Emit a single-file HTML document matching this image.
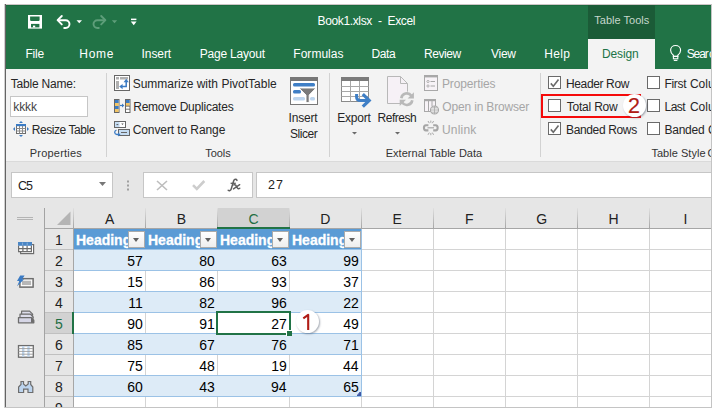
<!DOCTYPE html>
<html><head><meta charset="utf-8"><title>Book1.xlsx - Excel</title>
<style>
html,body{margin:0;padding:0;width:716px;height:412px;overflow:hidden;background:#ffffff;font-family:"Liberation Sans",sans-serif}
.a{position:absolute}
.t{position:absolute;white-space:pre}
svg{position:absolute;overflow:visible}
.cb{position:absolute;width:11px;height:11px;border:1px solid #6a6a6a;background:#ffffff}
.sep{position:absolute;width:1px;background:#d2d2d2}
.fb{position:absolute;width:15px;height:15px;border:1px solid #ababab;background:linear-gradient(#ffffff,#eeeeee)}
.fb:after{content:"";position:absolute;left:3.6px;top:6.4px;border-left:3.8px solid transparent;border-right:3.8px solid transparent;border-top:4.4px solid #606060}
.circ{position:absolute;width:23px;height:23px;border-radius:50%;background:#ffffff;box-shadow:1px 1px 2px rgba(60,70,90,0.45)}
</style></head><body>
<!-- frame -->
<div class="a" style="left:4px;top:4px;width:1px;height:404px;background:#d0d0d0"></div>
<div class="a" style="left:5px;top:4px;width:707px;height:1px;background:#cdc6c6"></div>
<div class="a" style="left:5px;top:4px;width:1px;height:404px;background:#646464"></div>
<div class="a" style="left:711px;top:4px;width:1px;height:404px;background:#c4c4c4"></div>
<div class="a" style="left:5px;top:407px;width:707px;height:1px;background:#c4c4c4"></div>

<!-- title bar + tabs -->
<div class="a" style="left:6px;top:5px;width:705px;height:64px;background:#217346"></div>
<div class="a" style="left:6px;top:5px;width:705px;height:1px;background:#1a6a3e"></div>
<div class="a" style="left:588px;top:5px;width:67px;height:34px;background:#1b5b37"></div>
<div class="a" style="left:588px;top:39px;width:67px;height:30px;background:#f3f3f3"></div>

<!--QAT-->
<svg style="left:0;top:0" width="716" height="40" viewBox="0 0 716 40">
  <rect x="28" y="15" width="14" height="13.6" fill="#fff"/>
  <path d="M30.1 16.4 H39.6 V20.2 L38.8 21 H30.9 L30.1 20.2 Z" fill="#217346"/>
  <rect x="31" y="23.9" width="8.4" height="3.5" fill="#217346"/>
  <rect x="33" y="25.6" width="2.2" height="1.8" fill="#fff"/>
  <path d="M58.5 20.2 H65.6 A3.9 3.9 0 0 1 65.6 28 H64.2" fill="none" stroke="#fff" stroke-width="1.9" stroke-linecap="round"/>
  <path d="M61.8 16 L57.6 20.2 L61.8 24.4" fill="none" stroke="#fff" stroke-width="1.9" stroke-linecap="round" stroke-linejoin="round"/>
  <path d="M76.5 20.3 H82 L79.25 23.2 Z" fill="#fff"/>
  <path d="M104.5 20.2 H97.4 A3.9 3.9 0 0 0 97.4 28 H98.8" fill="none" stroke="#5e9e7a" stroke-width="1.9" stroke-linecap="round"/>
  <path d="M101.2 16 L105.4 20.2 L101.2 24.4" fill="none" stroke="#5e9e7a" stroke-width="1.9" stroke-linecap="round" stroke-linejoin="round"/>
  <path d="M111.8 20.3 H117.2 L114.5 23.2 Z" fill="#5e9e7a"/>
  <rect x="131" y="18.6" width="5.4" height="1.5" fill="#fff"/>
  <path d="M130.8 21.6 H136.6 L133.7 25.2 Z" fill="#fff"/>
</svg>
<!-- lightbulb -->
<svg style="left:660px;top:40px" width="30" height="26" viewBox="660 40 30 26">
  <path d="M673.4 56.4 V55.2 C671.6 53.9 670.6 52.2 670.6 50.3 C670.6 47.4 672.8 45.5 675.6 45.5 C678.4 45.5 680.6 47.4 680.6 50.3 C680.6 52.2 679.6 53.9 677.8 55.2 V56.4 Z" fill="none" stroke="#fff" stroke-width="1.15"/>
  <rect x="673.4" y="56.4" width="4.4" height="2.4" fill="none" stroke="#fff" stroke-width="1.1"/>
  <path d="M673.8 60.4 H677.4" stroke="#fff" stroke-width="1.1"/>
</svg>

<!-- ribbon -->
<div class="a" style="left:6px;top:69px;width:705px;height:92px;background:#f3f3f3"></div>
<div class="a" style="left:6px;top:161px;width:705px;height:1px;background:#dadada"></div>
<div class="sep" style="left:106px;top:73px;height:84px"></div>
<div class="sep" style="left:329px;top:73px;height:84px"></div>
<div class="sep" style="left:540px;top:73px;height:84px"></div>
<div class="a" style="left:10px;top:96px;width:76px;height:19px;border:1px solid #c6c6c6;background:#fff"></div>

<svg style="left:0;top:68px" width="716" height="94" viewBox="0 68 716 94">
 <!-- resize table -->
 <rect x="16.5" y="125.5" width="9" height="8" fill="#fff" stroke="#6d6d6d" stroke-width="1"/>
 <rect x="16" y="124" width="10" height="2.2" fill="#3b7bc4"/>
 <path d="M16.5 128.5 H25.5 M16.5 131 H25.5 M19.5 126 V133.5 M22.5 126 V133.5" stroke="#8a8a8a" stroke-width="1"/>
 <path d="M21 121 L23 123 H19 Z M21 137 L23 135 H19 Z M13 129 L15 127 V131 Z M29 129 L27 127 V131 Z" fill="#3b7bc4"/>
 <!-- summarize -->
 <rect x="114.5" y="75.5" width="15" height="15" fill="#fff" stroke="#666" stroke-width="1"/>
 <rect x="116" y="77" width="3" height="2.5" fill="#b0b0b0"/>
 <rect x="120" y="77" width="8" height="2.5" fill="#b0b0b0"/>
 <rect x="116" y="81" width="3" height="8" fill="#b0b0b0"/>
 <path d="M121.5 86.6 H126.2 V81.5" fill="none" stroke="#3b7bc4" stroke-width="1.5"/>
 <path d="M119.2 86.6 L122.6 84 V89.2 Z M126.2 78.8 L123.6 82.2 H128.8 Z" fill="#3b7bc4"/>
 <!-- remove duplicates -->
 <rect x="114.5" y="99.5" width="4.5" height="13" fill="#fff" stroke="#666" stroke-width="1"/>
 <rect x="115" y="100" width="3.5" height="3" fill="#3b7bc4"/><rect x="115" y="103" width="3.5" height="3" fill="#f2c463"/>
 <rect x="115" y="106" width="3.5" height="3" fill="#3b7bc4"/><rect x="115" y="109" width="3.5" height="3" fill="#f2c463"/>
 <rect x="125.5" y="99.5" width="4.5" height="13" fill="#fff" stroke="#666" stroke-width="1"/>
 <rect x="126" y="100" width="3.5" height="3" fill="#3b7bc4"/><rect x="126" y="103" width="3.5" height="3" fill="#f2c463"/>
 <path d="M125.5 106.2 H130 M125.5 109.2 H130" stroke="#666" stroke-width="0.9"/>
 <path d="M120 105.5 H123" stroke="#3b7bc4" stroke-width="1.2"/><path d="M124.3 105.5 L122 103.6 V107.4 Z" fill="#3b7bc4"/>
 <!-- convert to range -->
 <rect x="114.5" y="121.5" width="11" height="6" fill="#fff" stroke="#666" stroke-width="1"/>
 <rect x="115" y="122" width="4.5" height="5" fill="#c5dcf2"/>
 <path d="M116.5 124.6 H118.3" stroke="#555" stroke-width="1"/>
 <path d="M121.3 123.5 H123.7 L122.5 125 Z" fill="#555"/>
 <rect x="118.5" y="129.5" width="11" height="6" fill="#c5dcf2" stroke="#666" stroke-width="1"/>
 <path d="M121 132.5 H127" stroke="#666" stroke-width="1"/>
 <path d="M116.5 130 C114 131 114 134 117 134.5 H119" fill="none" stroke="#3b7bc4" stroke-width="1.3"/>
 <path d="M120.5 134.5 L118 132.5 V136.5 Z" fill="#3b7bc4"/>
 <!-- insert slicer -->
 <rect x="290.5" y="77.5" width="27" height="27" fill="#fff" stroke="#777" stroke-width="1"/>
 <rect x="290" y="77" width="28" height="4" fill="#777"/>
 <rect x="293" y="83" width="22" height="3.6" rx="1.5" fill="#3f7fc6"/>
 <rect x="293" y="90" width="8" height="3.6" rx="1.5" fill="#3f7fc6"/>
 <rect x="293" y="97" width="12" height="3.6" rx="1.5" fill="#bdd5ee"/>
 <rect x="310" y="97" width="5" height="3.6" rx="1.5" fill="#bdd5ee"/>
 <path d="M299 88 H316 L309.2 95 V102.6 H306 V95 Z" fill="#7a7a7a" stroke="#fff" stroke-width="0.9"/>
 <!-- export -->
 <rect x="341.5" y="77.5" width="27" height="24" fill="#fff" stroke="#8a8a8a" stroke-width="1"/>
 <rect x="341" y="77" width="28" height="4" fill="#7b7b7b"/>
 <path d="M341.5 86.5 H368.5 M341.5 91.5 H368.5 M341.5 96.5 H368.5 M350.5 81 V101.5 M359.5 81 V101.5" stroke="#a8a8a8" stroke-width="1"/>
 <path d="M356.6 94 V97.2 C356.6 99.6 358 100.4 360.5 100.4 H368" fill="none" stroke="#3f7fc6" stroke-width="3"/>
 <path d="M362.8 94.2 L369.2 100.4 L362.8 106.6" fill="none" stroke="#3f7fc6" stroke-width="3.2"/>
 <!-- refresh -->
 <path d="M387.5 76.5 H400.5 L407.5 83.5 V103.5 H387.5 Z" fill="#f6f1f6" stroke="#b8b8b8" stroke-width="1"/>
 <path d="M400.5 76.5 V83.5 H407.5" fill="none" stroke="#b8b8b8" stroke-width="1"/>
 <circle cx="406.8" cy="99.2" r="7.6" fill="#f3f3f3"/>
 <path d="M401.3 98.2 A5.6 5.6 0 0 1 411.4 95.8 M412.3 100.2 A5.6 5.6 0 0 1 402.2 102.6" fill="none" stroke="#b9b9b9" stroke-width="2.6"/>
 <path d="M413.9 92.3 V98.6 H407.6 Z M399.7 106.1 V99.8 H406 Z" fill="#b9b9b9"/>
 <path d="M352 132 H357 L354.5 134.5 Z M395 132 H400 L397.5 134.5 Z" fill="#6a6a6a"/>
 <!-- properties -->
 <rect x="424.5" y="75.5" width="13" height="15" fill="#f7f3f7" stroke="#a8a8a8" stroke-width="1"/>
 <rect x="424" y="75" width="14" height="2.4" fill="#a8a8a8"/>
 <circle cx="428" cy="81.5" r="1.1" fill="none" stroke="#a8a8a8" stroke-width="0.9"/>
 <circle cx="428" cy="86" r="1.1" fill="none" stroke="#a8a8a8" stroke-width="0.9"/>
 <path d="M430.5 81.5 H435 M430.5 86 H435" stroke="#a8a8a8" stroke-width="1"/>
 <!-- open in browser -->
 <rect x="424.5" y="99.5" width="11" height="12" fill="#f7f3f7" stroke="#a8a8a8" stroke-width="1"/>
 <rect x="424" y="99" width="12" height="2.2" fill="#a8a8a8"/>
 <path d="M428.5 101 V111.5 M432 101 V106" stroke="#a8a8a8" stroke-width="1"/>
 <circle cx="434.5" cy="110" r="4" fill="#f3f3f3" stroke="#a8a8a8" stroke-width="1.1"/>
 <path d="M430.6 110 H438.4 M434.5 106 V114 M431.5 107.8 H437.5 M431.5 112.2 H437.5" stroke="#a8a8a8" stroke-width="0.8"/>
 <!-- unlink -->
 <path d="M428.4 125.2 H425.9 C423.3 125.2 423.3 130.4 425.9 130.4 H428.4 M433.2 125.2 H435.7 C438.3 125.2 438.3 130.4 435.7 130.4 H433.2" fill="none" stroke="#a6a6a6" stroke-width="2.1"/>
 <path d="M427.5 127.8 H434" stroke="#a8a8a8" stroke-width="1.2"/>
 <path d="M428 121 L429.3 123.2 M433.6 121 L432.3 123.2 M430.8 120.6 V122.8 M428 134.8 L429.3 132.6 M433.6 134.8 L432.3 132.6 M430.8 135.2 V133" stroke="#a8a8a8" stroke-width="1"/>
</svg>

<!-- checkboxes -->
<div class="cb" style="left:548px;top:76px"></div>
<div class="cb" style="left:548px;top:99px"></div>
<div class="cb" style="left:548px;top:122px"></div>
<div class="cb" style="left:647px;top:76px"></div>
<div class="cb" style="left:647px;top:99px"></div>
<div class="cb" style="left:647px;top:122px"></div>
<svg style="left:548px;top:76px" width="13" height="13" viewBox="0 0 13 13"><path d="M2.8 7.4 L5.3 10.2 L10.5 3.4" fill="none" stroke="#6a6a6a" stroke-width="1.6"/></svg>
<svg style="left:548px;top:122px" width="13" height="13" viewBox="0 0 13 13"><path d="M2.8 7.4 L5.3 10.2 L10.5 3.4" fill="none" stroke="#6a6a6a" stroke-width="1.6"/></svg>

<!-- formula bar area -->
<div class="a" style="left:6px;top:162px;width:705px;height:245px;background:#e6e6e6"></div>
<div class="a" style="left:11px;top:172px;width:100px;height:24px;border:1px solid #c6c6c6;background:#fff"></div>
<svg style="left:0;top:160px" width="716" height="40" viewBox="0 160 716 40">
  <path d="M99 182 H106 L102.5 186 Z" fill="#777"/>
  <rect x="127" y="180.5" width="2" height="2" fill="#a0a0a0"/>
  <rect x="127" y="184.5" width="2" height="2" fill="#a0a0a0"/>
  <rect x="127" y="188.5" width="2" height="2" fill="#a0a0a0"/>
</svg>
<div class="a" style="left:143px;top:172px;width:108px;height:24px;border:1px solid #c6c6c6;background:#fff"></div>
<svg style="left:0;top:160px" width="716" height="40" viewBox="0 160 716 40">
  <path d="M157 181 L167 190 M167 181 L157 190" stroke="#bdbdbd" stroke-width="1.6"/>
  <path d="M193 185.2 L196.8 189 L204.3 181" fill="none" stroke="#cdcdcd" stroke-width="2.6"/>
</svg>
<svg style="left:220px;top:172px" width="30" height="25" viewBox="220 172 30 25"><path d="M237 180.4 C236.4 179 234.4 178.9 233.7 180.8 L231.2 189 C230.7 190.6 229.2 191.1 228.2 190.2" fill="none" stroke="#5e5e5e" stroke-width="1.5" stroke-linecap="round"/><path d="M230.6 183.3 H235.8" stroke="#5e5e5e" stroke-width="1.3"/><path d="M233.8 184.9 C234.9 184.4 235.8 185 236.3 186.1 L237.3 187.9 C237.8 188.9 238.8 189.1 239.8 188.3 M239.7 184.7 L233.5 188.9" fill="none" stroke="#5e5e5e" stroke-width="1.4" stroke-linecap="round"/></svg>
<div class="a" style="left:256px;top:172px;width:460px;height:24px;border:1px solid #c6c6c6;background:#fff"></div>

<div class="a" style="left:44px;top:208px;width:1px;height:199px;background:#a3a3a3"></div>
<div class="a" style="left:17px;top:217px;width:16px;height:1px;background:#b4b4b4"></div>
<div class="a" style="left:17px;top:219px;width:16px;height:1px;background:#b4b4b4"></div>
<div class="a" style="left:45px;top:208px;width:666px;height:20px;background:#e6e6e6"></div>
<div class="a" style="left:73px;top:208px;width:1px;height:20px;background:linear-gradient(#e0e0e0,#a6a6a6)"></div>
<div class="a" style="left:145px;top:208px;width:1px;height:20px;background:linear-gradient(#e0e0e0,#a6a6a6)"></div>
<div class="a" style="left:217px;top:208px;width:1px;height:20px;background:linear-gradient(#e0e0e0,#a6a6a6)"></div>
<div class="a" style="left:289px;top:208px;width:1px;height:20px;background:linear-gradient(#e0e0e0,#a6a6a6)"></div>
<div class="a" style="left:361px;top:208px;width:1px;height:20px;background:linear-gradient(#e0e0e0,#a6a6a6)"></div>
<div class="a" style="left:433px;top:208px;width:1px;height:20px;background:linear-gradient(#e0e0e0,#a6a6a6)"></div>
<div class="a" style="left:505px;top:208px;width:1px;height:20px;background:linear-gradient(#e0e0e0,#a6a6a6)"></div>
<div class="a" style="left:577px;top:208px;width:1px;height:20px;background:linear-gradient(#e0e0e0,#a6a6a6)"></div>
<div class="a" style="left:649px;top:208px;width:1px;height:20px;background:linear-gradient(#e0e0e0,#a6a6a6)"></div>
<div class="a" style="left:218px;top:208px;width:71px;height:19px;background:#d2d2d2"></div>
<div class="a" style="left:45px;top:228px;width:666px;height:1px;background:#a6a6a6"></div>
<div class="a" style="left:217px;top:227px;width:73px;height:2px;background:#217346"></div>
<svg style="left:0;top:200px" width="80" height="30" viewBox="0 200 80 30"><path d="M57 225 H70.5 V211.5 Z" fill="#b4b4b4"/></svg>
<div class="a" style="left:45px;top:229px;width:28px;height:178px;background:#e6e6e6"></div>
<div class="a" style="left:73px;top:229px;width:1px;height:178px;background:#a6a6a6"></div>
<div class="a" style="left:45px;top:249px;width:28px;height:1px;background:#c0c0c0"></div>
<div class="a" style="left:45px;top:270px;width:28px;height:1px;background:#c0c0c0"></div>
<div class="a" style="left:45px;top:291px;width:28px;height:1px;background:#c0c0c0"></div>
<div class="a" style="left:45px;top:312px;width:28px;height:1px;background:#c0c0c0"></div>
<div class="a" style="left:45px;top:333px;width:28px;height:1px;background:#c0c0c0"></div>
<div class="a" style="left:45px;top:354px;width:28px;height:1px;background:#c0c0c0"></div>
<div class="a" style="left:45px;top:375px;width:28px;height:1px;background:#c0c0c0"></div>
<div class="a" style="left:45px;top:396px;width:28px;height:1px;background:#c0c0c0"></div>
<div class="a" style="left:45px;top:417px;width:28px;height:1px;background:#c0c0c0"></div>
<div class="a" style="left:45px;top:313px;width:27px;height:20px;background:#d2d2d2"></div>
<div class="a" style="left:72px;top:312px;width:2px;height:22px;background:#217346"></div>
<div class="a" style="left:74px;top:229px;width:637px;height:178px;background:#ffffff"></div>
<div class="a" style="left:145px;top:229px;width:1px;height:178px;background:#d4d4d4"></div>
<div class="a" style="left:217px;top:229px;width:1px;height:178px;background:#d4d4d4"></div>
<div class="a" style="left:289px;top:229px;width:1px;height:178px;background:#d4d4d4"></div>
<div class="a" style="left:361px;top:229px;width:1px;height:178px;background:#d4d4d4"></div>
<div class="a" style="left:433px;top:229px;width:1px;height:178px;background:#d4d4d4"></div>
<div class="a" style="left:505px;top:229px;width:1px;height:178px;background:#d4d4d4"></div>
<div class="a" style="left:577px;top:229px;width:1px;height:178px;background:#d4d4d4"></div>
<div class="a" style="left:649px;top:229px;width:1px;height:178px;background:#d4d4d4"></div>
<div class="a" style="left:74px;top:249px;width:637px;height:1px;background:#d4d4d4"></div>
<div class="a" style="left:74px;top:270px;width:637px;height:1px;background:#d4d4d4"></div>
<div class="a" style="left:74px;top:291px;width:637px;height:1px;background:#d4d4d4"></div>
<div class="a" style="left:74px;top:312px;width:637px;height:1px;background:#d4d4d4"></div>
<div class="a" style="left:74px;top:333px;width:637px;height:1px;background:#d4d4d4"></div>
<div class="a" style="left:74px;top:354px;width:637px;height:1px;background:#d4d4d4"></div>
<div class="a" style="left:74px;top:375px;width:637px;height:1px;background:#d4d4d4"></div>
<div class="a" style="left:74px;top:396px;width:637px;height:1px;background:#d4d4d4"></div>
<div class="a" style="left:74px;top:417px;width:637px;height:1px;background:#d4d4d4"></div>
<div class="a" style="left:74px;top:229px;width:287px;height:20px;background:#5b9bd5"></div>
<div class="a" style="left:74px;top:250px;width:287px;height:20px;background:#ddebf7"></div>
<div class="a" style="left:74px;top:292px;width:287px;height:20px;background:#ddebf7"></div>
<div class="a" style="left:74px;top:334px;width:287px;height:20px;background:#ddebf7"></div>
<div class="a" style="left:74px;top:376px;width:287px;height:20px;background:#ddebf7"></div>
<div class="a" style="left:74px;top:249px;width:288px;height:1px;background:#9bc2e6"></div>
<div class="a" style="left:74px;top:270px;width:288px;height:1px;background:#9bc2e6"></div>
<div class="a" style="left:74px;top:291px;width:288px;height:1px;background:#9bc2e6"></div>
<div class="a" style="left:74px;top:312px;width:288px;height:1px;background:#9bc2e6"></div>
<div class="a" style="left:74px;top:333px;width:288px;height:1px;background:#9bc2e6"></div>
<div class="a" style="left:74px;top:354px;width:288px;height:1px;background:#9bc2e6"></div>
<div class="a" style="left:74px;top:375px;width:288px;height:1px;background:#9bc2e6"></div>
<div class="a" style="left:74px;top:396px;width:288px;height:1px;background:#9bc2e6"></div>
<div class="a" style="left:361px;top:229px;width:1px;height:168px;background:#9bc2e6"></div>
<div class="fb" style="left:128px;top:231px"></div>
<div class="fb" style="left:200px;top:231px"></div>
<div class="fb" style="left:272px;top:231px"></div>
<div class="fb" style="left:344px;top:231px"></div>
<svg style="left:350px;top:385px" width="16" height="16" viewBox="350 385 16 16"><path d="M357 396 H361 V392 H359.2 V393.3 H358.2 V394.6 H357 Z" fill="#3f58a6"/></svg>
<div class="a" style="left:216px;top:311px;width:75px;height:2px;background:#217346"></div>
<div class="a" style="left:216px;top:311px;width:2px;height:24px;background:#217346"></div>
<div class="a" style="left:216px;top:333px;width:70px;height:2px;background:#217346"></div>
<div class="a" style="left:289px;top:311px;width:2px;height:19px;background:#217346"></div>
<div class="a" style="left:286px;top:330px;width:6px;height:6px;background:#ffffff"></div>
<div class="a" style="left:287px;top:331px;width:5px;height:5px;background:#217346"></div>
<svg style="left:0;top:230px" width="44" height="170" viewBox="0 230 44 170">
 <rect x="20.6" y="244.6" width="13" height="9" fill="#fff" stroke="#6d6d6d" stroke-width="1.2"/>
 <rect x="18" y="242" width="14" height="10" fill="#fff"/>
 <rect x="18" y="242" width="14" height="3.8" fill="#4a86c5"/>
 <path d="M22.6 242.6 V245.2 M27.2 242.6 V245.2" stroke="#8fb4dc" stroke-width="0.9"/>
 <path d="M18.6 245.8 V251.6 H31.4 V245.8 M18.6 248.7 H31.4 M22.9 245.8 V251.6 M27.1 245.8 V251.6" fill="none" stroke="#6d6d6d" stroke-width="1.2"/>
 <rect x="19.8" y="278.6" width="13.4" height="8.6" fill="#b7b7b7" stroke="#6d6d6d" stroke-width="1.3"/>
 <rect x="21.4" y="280.2" width="10.2" height="5.4" fill="#b7b7b7" stroke="#fff" stroke-width="1"/>
 <path d="M20.2 275.6 H24.6 L22.2 279.2 H24.2 L17 286.2 L19.4 281 H17 Z" fill="#3b7bc4"/>
 <path d="M21.6 311.2 H29.6 L32.6 314.2 V315.2 H21.6 Z" fill="#dcdcea" stroke="#6d6d6d" stroke-width="1.2" stroke-linejoin="round"/>
 <path d="M20 314.2 H30.4 L33.2 317 V318.2 H20 Z" fill="#dcdcea" stroke="#6d6d6d" stroke-width="1.2" stroke-linejoin="round"/>
 <path d="M18.5 317.6 H31 L33.8 320.2 V322.8 H18.5 Z" fill="#d6d6e6" stroke="#6d6d6d" stroke-width="1.3" stroke-linejoin="round"/>
 <path d="M31 317.6 L33.8 320.2 V322.8 H31 Z" fill="#6d6d6d"/>
 <rect x="18.5" y="345.6" width="14.8" height="11.6" fill="#fff" stroke="#6d6d6d" stroke-width="1.3"/>
 <rect x="22" y="346.2" width="2.4" height="10.4" fill="#bcd4ee"/>
 <rect x="27.3" y="346.2" width="2.4" height="10.4" fill="#bcd4ee"/>
 <path d="M18.5 348.6 H33 M18.5 351.4 H33 M18.5 354.2 H33" stroke="#9a9a9a" stroke-width="0.9"/>
 <path d="M21 381.5 H23.5 V384 L25.8 386 L28.2 384 V381.5 H30.7 V384.5 L32.8 387 V392.5 H28 V389.2 H23.6 V392.5 H18.6 V387 L21 384.5 Z" fill="#bcd4ee" stroke="#6d6d6d" stroke-width="1.2"/>
</svg>

<span class="t" style="left:317.50px;top:14.54px;font-size:12px;line-height:12px;color:#ffffff;letter-spacing:-0.358px">Book1.xlsx  -  Excel</span>
<span class="t" style="left:594.25px;top:15.19px;font-size:11px;line-height:11px;color:#c5d6cb;letter-spacing:0.025px">Table Tools</span>
<span class="t" style="left:25.40px;top:47.74px;font-size:12px;line-height:12px;color:#ffffff;letter-spacing:-0.200px">File</span>
<span class="t" style="left:79.30px;top:47.74px;font-size:12px;line-height:12px;color:#ffffff;letter-spacing:0.733px">Home</span>
<span class="t" style="left:141.60px;top:47.74px;font-size:12px;line-height:12px;color:#ffffff;letter-spacing:-0.100px">Insert</span>
<span class="t" style="left:199.80px;top:47.74px;font-size:12px;line-height:12px;color:#ffffff;letter-spacing:-0.215px">Page Layout</span>
<span class="t" style="left:293.30px;top:47.74px;font-size:12px;line-height:12px;color:#ffffff;letter-spacing:0.029px">Formulas</span>
<span class="t" style="left:371.50px;top:47.74px;font-size:12px;line-height:12px;color:#ffffff;letter-spacing:-0.400px">Data</span>
<span class="t" style="left:424.00px;top:47.74px;font-size:12px;line-height:12px;color:#ffffff;letter-spacing:-0.440px">Review</span>
<span class="t" style="left:491.00px;top:47.74px;font-size:12px;line-height:12px;color:#ffffff;letter-spacing:-0.283px">View</span>
<span class="t" style="left:544.20px;top:47.74px;font-size:12px;line-height:12px;color:#ffffff;letter-spacing:0.383px">Help</span>
<span class="t" style="left:602.00px;top:47.74px;font-size:12px;line-height:12px;color:#217346;letter-spacing:-0.150px">Design</span>
<span class="t" style="left:686.70px;top:47.74px;font-size:12px;line-height:12px;color:#ffffff;letter-spacing:-1.117px">Sear</span>
<span class="t" style="left:709.10px;top:47.74px;font-size:12px;line-height:12px;color:#ffffff">ch</span>
<span class="t" style="left:10.65px;top:77.64px;font-size:12px;line-height:12px;color:#262626;letter-spacing:-0.190px">Table Name:</span>
<span class="t" style="left:13.25px;top:100.54px;font-size:12px;line-height:12px;color:#444444;letter-spacing:-0.117px">kkkk</span>
<span class="t" style="left:31.70px;top:123.54px;font-size:12px;line-height:12px;color:#262626;letter-spacing:-0.427px">Resize Table</span>
<span class="t" style="left:29.70px;top:147.59px;font-size:11px;line-height:11px;color:#333333;letter-spacing:0.228px">Properties</span>
<span class="t" style="left:132.70px;top:77.64px;font-size:12px;line-height:12px;color:#262626">Summarize with PivotTable</span>
<span class="t" style="left:133.20px;top:100.54px;font-size:12px;line-height:12px;color:#262626;letter-spacing:-0.222px">Remove Duplicates</span>
<span class="t" style="left:132.70px;top:123.54px;font-size:12px;line-height:12px;color:#262626;letter-spacing:-0.093px">Convert to Range</span>
<span class="t" style="left:205.25px;top:147.59px;font-size:11px;line-height:11px;color:#333333;letter-spacing:-0.075px">Tools</span>
<span class="t" style="left:288.50px;top:111.84px;font-size:12px;line-height:12px;color:#262626;letter-spacing:-0.180px">Insert</span>
<span class="t" style="left:290.00px;top:127.54px;font-size:12px;line-height:12px;color:#262626;letter-spacing:-0.430px">Slicer</span>
<span class="t" style="left:337.30px;top:111.84px;font-size:12px;line-height:12px;color:#262626;letter-spacing:-0.250px">Export</span>
<span class="t" style="left:377.50px;top:111.84px;font-size:12px;line-height:12px;color:#262626;letter-spacing:-0.458px">Refresh</span>
<span class="t" style="left:442.00px;top:77.64px;font-size:12px;line-height:12px;color:#a6a6a6;letter-spacing:-0.139px">Properties</span>
<span class="t" style="left:442.30px;top:100.54px;font-size:12px;line-height:12px;color:#a6a6a6;letter-spacing:-0.168px">Open in Browser</span>
<span class="t" style="left:442.00px;top:123.54px;font-size:12px;line-height:12px;color:#a6a6a6;letter-spacing:0.190px">Unlink</span>
<span class="t" style="left:385.70px;top:147.59px;font-size:11px;line-height:11px;color:#333333;letter-spacing:0.042px">External Table Data</span>
<span class="t" style="left:566.00px;top:77.64px;font-size:12px;line-height:12px;color:#262626;letter-spacing:-0.372px">Header Row</span>
<span class="t" style="left:566.75px;top:100.54px;font-size:12px;line-height:12px;color:#262626;letter-spacing:-0.213px">Total Row</span>
<span class="t" style="left:566.00px;top:123.54px;font-size:12px;line-height:12px;color:#262626;letter-spacing:-0.355px">Banded Rows</span>
<span class="t" style="left:664.60px;top:77.64px;font-size:12px;line-height:12px;color:#262626;letter-spacing:-0.363px">First</span>
<span class="t" style="left:689.90px;top:77.64px;font-size:12px;line-height:12px;color:#262626">Column</span>
<span class="t" style="left:664.60px;top:100.54px;font-size:12px;line-height:12px;color:#262626;letter-spacing:-0.583px">Last</span>
<span class="t" style="left:689.90px;top:100.54px;font-size:12px;line-height:12px;color:#262626">Column</span>
<span class="t" style="left:664.50px;top:123.54px;font-size:12px;line-height:12px;color:#262626;letter-spacing:-0.250px">Banded</span>
<span class="t" style="left:708.10px;top:123.54px;font-size:12px;line-height:12px;color:#262626">Columns</span>
<span class="t" style="left:651.45px;top:147.59px;font-size:11px;line-height:11px;color:#333333;letter-spacing:0.030px">Table Style</span>
<span class="t" style="left:707.50px;top:147.59px;font-size:11px;line-height:11px;color:#333333">Options</span>
<span class="t" style="left:17.90px;top:179.52px;font-size:12.5px;line-height:12.5px;color:#222222;letter-spacing:-0.800px">C5</span>
<span class="t" style="left:267.90px;top:179.22px;font-size:12.5px;line-height:12.5px;color:#222222;letter-spacing:1.250px">27</span>
<span class="t" style="left:104.88px;top:211.95px;font-size:14px;line-height:14px;color:#222222">A</span>
<span class="t" style="left:176.75px;top:211.95px;font-size:14px;line-height:14px;color:#222222">B</span>
<span class="t" style="left:248.38px;top:211.95px;font-size:14px;line-height:14px;color:#1f6e43">C</span>
<span class="t" style="left:320.25px;top:211.95px;font-size:14px;line-height:14px;color:#222222">D</span>
<span class="t" style="left:392.62px;top:211.95px;font-size:14px;line-height:14px;color:#222222">E</span>
<span class="t" style="left:465.00px;top:211.95px;font-size:14px;line-height:14px;color:#222222">F</span>
<span class="t" style="left:536.25px;top:211.95px;font-size:14px;line-height:14px;color:#222222">G</span>
<span class="t" style="left:608.50px;top:211.95px;font-size:14px;line-height:14px;color:#222222">H</span>
<span class="t" style="left:683.50px;top:211.95px;font-size:14px;line-height:14px;color:#222222">I</span>
<span class="t" style="left:54.88px;top:232.95px;font-size:14px;line-height:14px;color:#222222">1</span>
<span class="t" style="left:55.12px;top:253.95px;font-size:14px;line-height:14px;color:#222222">2</span>
<span class="t" style="left:55.12px;top:274.95px;font-size:14px;line-height:14px;color:#222222">3</span>
<span class="t" style="left:55.12px;top:295.95px;font-size:14px;line-height:14px;color:#222222">4</span>
<span class="t" style="left:55.00px;top:316.95px;font-size:14px;line-height:14px;color:#1f6e43">5</span>
<span class="t" style="left:55.00px;top:337.95px;font-size:14px;line-height:14px;color:#222222">6</span>
<span class="t" style="left:55.12px;top:358.95px;font-size:14px;line-height:14px;color:#222222">7</span>
<span class="t" style="left:55.12px;top:379.95px;font-size:14px;line-height:14px;color:#222222">8</span>
<span class="t" style="left:55.00px;top:400.95px;font-size:14px;line-height:14px;color:#222222">9</span>
<span class="t" style="left:127.20px;top:254.15px;font-size:14px;line-height:14px;color:#000000">57</span>
<span class="t" style="left:199.20px;top:254.15px;font-size:14px;line-height:14px;color:#000000">80</span>
<span class="t" style="left:271.20px;top:254.15px;font-size:14px;line-height:14px;color:#000000">63</span>
<span class="t" style="left:343.20px;top:254.15px;font-size:14px;line-height:14px;color:#000000">99</span>
<span class="t" style="left:127.20px;top:275.15px;font-size:14px;line-height:14px;color:#000000">15</span>
<span class="t" style="left:199.20px;top:275.15px;font-size:14px;line-height:14px;color:#000000">86</span>
<span class="t" style="left:271.20px;top:275.15px;font-size:14px;line-height:14px;color:#000000">93</span>
<span class="t" style="left:343.20px;top:275.15px;font-size:14px;line-height:14px;color:#000000">37</span>
<span class="t" style="left:128.20px;top:296.15px;font-size:14px;line-height:14px;color:#000000">11</span>
<span class="t" style="left:199.20px;top:296.15px;font-size:14px;line-height:14px;color:#000000">82</span>
<span class="t" style="left:271.20px;top:296.15px;font-size:14px;line-height:14px;color:#000000">96</span>
<span class="t" style="left:343.20px;top:296.15px;font-size:14px;line-height:14px;color:#000000">22</span>
<span class="t" style="left:127.20px;top:317.15px;font-size:14px;line-height:14px;color:#000000">90</span>
<span class="t" style="left:199.20px;top:317.15px;font-size:14px;line-height:14px;color:#000000">91</span>
<span class="t" style="left:271.20px;top:317.15px;font-size:14px;line-height:14px;color:#000000">27</span>
<span class="t" style="left:343.20px;top:317.15px;font-size:14px;line-height:14px;color:#000000">49</span>
<span class="t" style="left:127.20px;top:338.15px;font-size:14px;line-height:14px;color:#000000">85</span>
<span class="t" style="left:199.20px;top:338.15px;font-size:14px;line-height:14px;color:#000000">67</span>
<span class="t" style="left:271.20px;top:338.15px;font-size:14px;line-height:14px;color:#000000">76</span>
<span class="t" style="left:343.20px;top:338.15px;font-size:14px;line-height:14px;color:#000000">71</span>
<span class="t" style="left:127.20px;top:359.15px;font-size:14px;line-height:14px;color:#000000">75</span>
<span class="t" style="left:199.20px;top:359.15px;font-size:14px;line-height:14px;color:#000000">48</span>
<span class="t" style="left:271.20px;top:359.15px;font-size:14px;line-height:14px;color:#000000">19</span>
<span class="t" style="left:342.95px;top:359.15px;font-size:14px;line-height:14px;color:#000000">44</span>
<span class="t" style="left:127.20px;top:380.15px;font-size:14px;line-height:14px;color:#000000">60</span>
<span class="t" style="left:199.20px;top:380.15px;font-size:14px;line-height:14px;color:#000000">43</span>
<span class="t" style="left:270.95px;top:380.15px;font-size:14px;line-height:14px;color:#000000">94</span>
<span class="t" style="left:343.20px;top:380.15px;font-size:14px;line-height:14px;color:#000000">65</span>
<div class="a" style="left:73px;top:229px;width:55px;height:20px;overflow:hidden"><span class="t" style="left:76.10px;top:232.95px;font-size:14px;line-height:14px;color:#ffffff;font-weight:bold;-webkit-text-stroke:0.3px #ffffff;left:3.00px;top:3.95px">Heading</span></div>
<div class="a" style="left:145px;top:229px;width:55px;height:20px;overflow:hidden"><span class="t" style="left:148.10px;top:232.95px;font-size:14px;line-height:14px;color:#ffffff;font-weight:bold;-webkit-text-stroke:0.3px #ffffff;left:3.00px;top:3.95px">Heading</span></div>
<div class="a" style="left:217px;top:229px;width:55px;height:20px;overflow:hidden"><span class="t" style="left:220.10px;top:232.95px;font-size:14px;line-height:14px;color:#ffffff;font-weight:bold;-webkit-text-stroke:0.3px #ffffff;left:3.00px;top:3.95px">Heading</span></div>
<div class="a" style="left:289px;top:229px;width:55px;height:20px;overflow:hidden"><span class="t" style="left:292.10px;top:232.95px;font-size:14px;line-height:14px;color:#ffffff;font-weight:bold;-webkit-text-stroke:0.3px #ffffff;left:3.00px;top:3.95px">Heading</span></div>

<!-- annotations -->
<div class="a" style="left:541px;top:94px;width:96px;height:20px;border:2px solid #f50a0a"></div>
<div class="circ" style="left:622.5px;top:94px"></div>
<div class="circ" style="left:295.5px;top:310.2px"></div>
<span class="t" style="left:628.10px;top:96.10px;font-size:21.5px;line-height:21.5px;color:#b01c16;-webkit-text-stroke:0.2px #b01c16">2</span>
<svg style="left:290px;top:305px" width="30" height="30" viewBox="290 305 30 30"><path d="M303.3 318.4 L308.2 314.8 V330" fill="none" stroke="#b01c16" stroke-width="2.1" stroke-linejoin="round"/></svg>
<!-- frame redraw on top -->
<div class="a" style="left:711px;top:4px;width:1px;height:404px;background:#c4c4c4"></div>
<div class="a" style="left:712px;top:0px;width:4px;height:412px;background:#fff"></div>
<div class="a" style="left:0px;top:408px;width:716px;height:4px;background:#fff"></div>
<div class="a" style="left:5px;top:407px;width:707px;height:1px;background:#c4c4c4"></div>
</body></html>
